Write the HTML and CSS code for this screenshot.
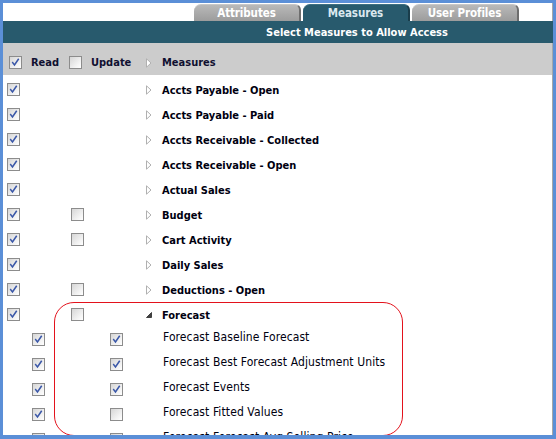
FILE: index.html
```html
<!DOCTYPE html>
<html>
<head>
<meta charset="utf-8">
<link rel="stylesheet" href="styles.css">
</head>
<body>
<div class="frame">
  <div class="inner">
    <div class="tabs">
      <div class="tab">Attributes</div>
      <div class="tab active">Measures</div>
      <div class="tab">User Profiles</div>
    </div>
    <div class="titlebar"><span>Select Measures to Allow Access</span></div>
    <div class="head">
      <div class="hcell hread"><span class="cb on"><svg viewBox="0 0 13 13"><path d="M3.2 6.6 L5.3 9.4 L9.8 2.8"/></svg></span><span class="hlabel">Read</span></div>
      <div class="hcell hupd"><span class="cb"></span><span class="hlabel">Update</span></div>
      <div class="tri"><svg viewBox="0 0 6 10"><polygon points="0.5,0.8 5,5 0.5,9.2"/></svg></div>
      <span class="hlabel">Measures</span>
    </div>
    <div class="list">
      <div class="row parent"><div class="c1"><span class="cb on"><svg viewBox="0 0 13 13"><path d="M3.2 6.6 L5.3 9.4 L9.8 2.8"/></svg></span></div><div class="c2"></div><div class="tri"><svg viewBox="0 0 6 10"><polygon points="0.5,0.8 5,5 0.5,9.2"/></svg></div><span class="plabel">Accts Payable - Open</span></div>
      <div class="row parent"><div class="c1"><span class="cb on"><svg viewBox="0 0 13 13"><path d="M3.2 6.6 L5.3 9.4 L9.8 2.8"/></svg></span></div><div class="c2"></div><div class="tri"><svg viewBox="0 0 6 10"><polygon points="0.5,0.8 5,5 0.5,9.2"/></svg></div><span class="plabel">Accts Payable - Paid</span></div>
      <div class="row parent"><div class="c1"><span class="cb on"><svg viewBox="0 0 13 13"><path d="M3.2 6.6 L5.3 9.4 L9.8 2.8"/></svg></span></div><div class="c2"></div><div class="tri"><svg viewBox="0 0 6 10"><polygon points="0.5,0.8 5,5 0.5,9.2"/></svg></div><span class="plabel">Accts Receivable - Collected</span></div>
      <div class="row parent"><div class="c1"><span class="cb on"><svg viewBox="0 0 13 13"><path d="M3.2 6.6 L5.3 9.4 L9.8 2.8"/></svg></span></div><div class="c2"></div><div class="tri"><svg viewBox="0 0 6 10"><polygon points="0.5,0.8 5,5 0.5,9.2"/></svg></div><span class="plabel">Accts Receivable - Open</span></div>
      <div class="row parent"><div class="c1"><span class="cb on"><svg viewBox="0 0 13 13"><path d="M3.2 6.6 L5.3 9.4 L9.8 2.8"/></svg></span></div><div class="c2"></div><div class="tri"><svg viewBox="0 0 6 10"><polygon points="0.5,0.8 5,5 0.5,9.2"/></svg></div><span class="plabel">Actual Sales</span></div>
      <div class="row parent"><div class="c1"><span class="cb on"><svg viewBox="0 0 13 13"><path d="M3.2 6.6 L5.3 9.4 L9.8 2.8"/></svg></span></div><div class="c2"><span class="cb"></span></div><div class="tri"><svg viewBox="0 0 6 10"><polygon points="0.5,0.8 5,5 0.5,9.2"/></svg></div><span class="plabel">Budget</span></div>
      <div class="row parent"><div class="c1"><span class="cb on"><svg viewBox="0 0 13 13"><path d="M3.2 6.6 L5.3 9.4 L9.8 2.8"/></svg></span></div><div class="c2"><span class="cb"></span></div><div class="tri"><svg viewBox="0 0 6 10"><polygon points="0.5,0.8 5,5 0.5,9.2"/></svg></div><span class="plabel">Cart Activity</span></div>
      <div class="row parent"><div class="c1"><span class="cb on"><svg viewBox="0 0 13 13"><path d="M3.2 6.6 L5.3 9.4 L9.8 2.8"/></svg></span></div><div class="c2"></div><div class="tri"><svg viewBox="0 0 6 10"><polygon points="0.5,0.8 5,5 0.5,9.2"/></svg></div><span class="plabel">Daily Sales</span></div>
      <div class="row parent"><div class="c1"><span class="cb on"><svg viewBox="0 0 13 13"><path d="M3.2 6.6 L5.3 9.4 L9.8 2.8"/></svg></span></div><div class="c2"><span class="cb"></span></div><div class="tri"><svg viewBox="0 0 6 10"><polygon points="0.5,0.8 5,5 0.5,9.2"/></svg></div><span class="plabel">Deductions - Open</span></div>
      <div class="row parent"><div class="c1"><span class="cb on"><svg viewBox="0 0 13 13"><path d="M3.2 6.6 L5.3 9.4 L9.8 2.8"/></svg></span></div><div class="c2"><span class="cb"></span></div><div class="tri"><svg class="down" viewBox="0 0 6 10"><polygon points="5.5,2.5 5.5,7.5 0.5,7.5"/></svg></div><span class="plabel">Forecast</span></div>
      <div class="row child"><div class="k1"><span class="cb on"><svg viewBox="0 0 13 13"><path d="M3.2 6.6 L5.3 9.4 L9.8 2.8"/></svg></span></div><div class="k2"><span class="cb on"><svg viewBox="0 0 13 13"><path d="M3.2 6.6 L5.3 9.4 L9.8 2.8"/></svg></span></div><span class="clabel">Forecast Baseline Forecast</span></div>
      <div class="row child"><div class="k1"><span class="cb on"><svg viewBox="0 0 13 13"><path d="M3.2 6.6 L5.3 9.4 L9.8 2.8"/></svg></span></div><div class="k2"><span class="cb on"><svg viewBox="0 0 13 13"><path d="M3.2 6.6 L5.3 9.4 L9.8 2.8"/></svg></span></div><span class="clabel">Forecast Best Forecast Adjustment Units</span></div>
      <div class="row child"><div class="k1"><span class="cb on"><svg viewBox="0 0 13 13"><path d="M3.2 6.6 L5.3 9.4 L9.8 2.8"/></svg></span></div><div class="k2"><span class="cb on"><svg viewBox="0 0 13 13"><path d="M3.2 6.6 L5.3 9.4 L9.8 2.8"/></svg></span></div><span class="clabel">Forecast Events</span></div>
      <div class="row child"><div class="k1"><span class="cb on"><svg viewBox="0 0 13 13"><path d="M3.2 6.6 L5.3 9.4 L9.8 2.8"/></svg></span></div><div class="k2"><span class="cb"></span></div><span class="clabel">Forecast Fitted Values</span></div>
      <div class="row child"><div class="k1"><span class="cb on"><svg viewBox="0 0 13 13"><path d="M3.2 6.6 L5.3 9.4 L9.8 2.8"/></svg></span></div><div class="k2"><span class="cb"></span></div><span class="clabel">Forecast Forecast Avg Selling Price</span></div>
    </div>
    <div class="highlight"></div>
  </div>
</div>
</body>
</html>
```
FILE: styles.css
```css
html, body {
  margin: 0;
  padding: 0;
  background: #ffffff;
}
.frame {
  width: 556px;
  height: 439px;
  box-sizing: border-box;
  border: 3px solid #5b8fd7;
  border-bottom-width: 4px;
  overflow: hidden;
  font-family: "DejaVu Sans Condensed", "DejaVu Sans", sans-serif;
  font-stretch: condensed;
}
.inner {
  position: relative;
  height: 100%;
  background: #ffffff;
  box-shadow: inset -1px 0 0 #a8a8a8;
}
.tabs {
  display: flex;
  justify-content: flex-end;
  gap: 2px;
  height: 18px;
  padding-right: 34px;
  align-items: flex-end;
}
.tab {
  width: 107px;
  height: 17px;
  box-sizing: border-box;
  background: linear-gradient(#b9b9b9, #9c9c9c);
  color: #ffffff;
  font-weight: bold;
  font-size: 11.5px;
  letter-spacing: -0.1px;
  display: flex;
  align-items: center;
  justify-content: center;
  border-radius: 7px 6px 0 0;
  border-right: 2px solid #6e6e6e;
  border-top: 1px solid #c8c8c8;
}
.tab.active {
  background: #285a6d;
  color: #dbe8ef;
  border-right-color: #1a3d4b;
  border-top-color: #3d6f82;
}
.titlebar {
  height: 22px;
  background: #285a6d;
  display: flex;
  align-items: center;
  justify-content: center;
  padding-left: 159px;
  padding-right: 1px;
  color: #ffffff;
  font-weight: bold;
  font-size: 11px;
}
.head {
  height: 32px;
  box-sizing: border-box;
  background: #cccccc;
  display: flex;
  align-items: center;
  padding-top: 7px;
  margin-right: 1px;
}
.hcell {
  display: flex;
  align-items: center;
  gap: 9px;
}
.hread {
  width: 66px;
  padding-left: 6px;
  box-sizing: border-box;
}
.hupd {
  width: 77px;
}
.hlabel {
  font-weight: bold;
  font-size: 11px;
  color: #101030;
}
.tri {
  width: 16px;
  display: flex;
  align-items: center;
}
.tri svg {
  width: 6px;
  height: 10px;
}
.tri polygon {
  fill: #ffffff;
  stroke: #b0b0b0;
  stroke-width: 1;
}
.tri svg.down polygon {
  fill: #404040;
  stroke: #404040;
}
.list {
  padding-top: 2px;
}
.row {
  height: 25px;
  display: flex;
  align-items: center;
}
.c1 {
  width: 68px;
  padding-left: 4px;
  box-sizing: border-box;
  display: flex;
}
.c2 {
  width: 75px;
  display: flex;
}
.k1 {
  width: 107px;
  padding-left: 29px;
  box-sizing: border-box;
  display: flex;
}
.k2 {
  width: 53px;
  display: flex;
}
.plabel {
  font-weight: bold;
  font-size: 11px;
  color: #000010;
  padding-top: 1px;
}
.clabel {
  font-size: 12px;
  letter-spacing: 0.1px;
  color: #000010;
  padding-bottom: 5px;
}
.cb {
  width: 13px;
  height: 13px;
  box-sizing: border-box;
  border: 1px solid #8c8c8c;
  background: linear-gradient(135deg, #d6d6d6, #f4f4f4 70%, #ffffff);
  display: inline-flex;
  align-items: center;
  justify-content: center;
}
.cb svg {
  width: 11px;
  height: 11px;
}
.cb path {
  fill: none;
  stroke: #3a57a8;
  stroke-width: 1.8;
  stroke-linecap: square;
}
.highlight {
  position: absolute;
  left: 51px;
  top: 299px;
  width: 349px;
  height: 134px;
  box-sizing: border-box;
  border: 1.5px solid #e3121c;
  border-radius: 20px;
  pointer-events: none;
}
```
